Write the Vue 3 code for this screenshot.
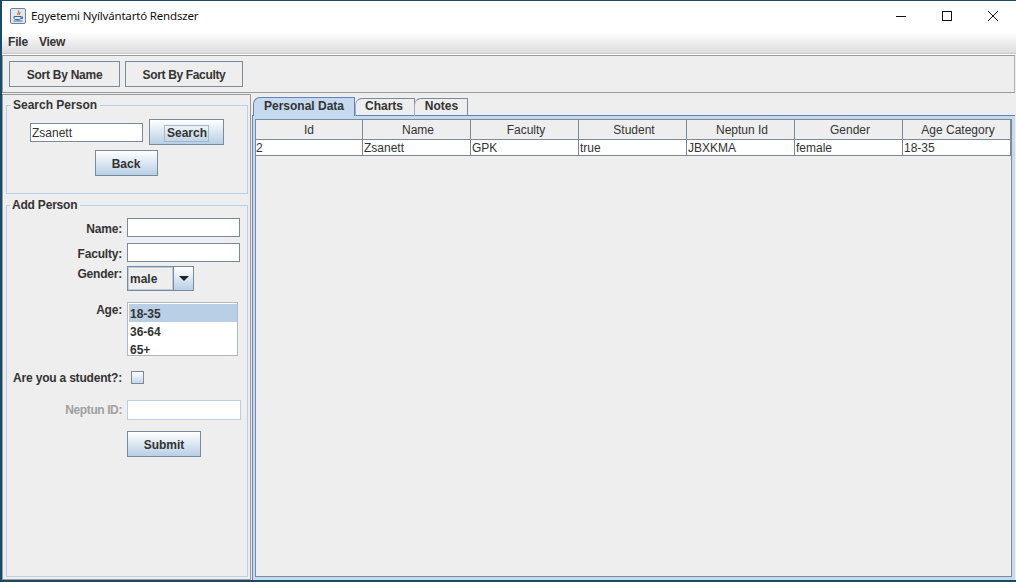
<script setup>
const columns = ['Id', 'Name', 'Faculty', 'Student', 'Neptun Id', 'Gender', 'Age Category']
const row = ['2', 'Zsanett', 'GPK', 'true', 'JBXKMA', 'female', '18-35']
const tabs = ['Personal Data', 'Charts', 'Notes']
const ages = ['18-35', '36-64', '65+']
</script>

<template>
  <div class="window">
    <header class="titlebar">
      <svg class="app-icon" viewBox="0 0 16 16">
        <rect x="0.5" y="0.5" width="15" height="15" rx="1.5" fill="#dfe8f2" stroke="#6d8196" />
        <path d="M8.5 2.5c1.5 1.5-2 2.500-.5 4.500M10 4c.8 1-1.500 1.500-.5 3" fill="none" stroke="#d9622b" stroke-width="1.100" />
        <path d="M4 8.500h7v1.500c0 1-1 1.500-2 1.500H6c-1 0-2-.5-2-1.500zM11 9h1.500v1.500H11M3.500 13h9" fill="none" stroke="#3c6a94" stroke-width="1" />
      </svg>
      <span class="title">Egyetemi Nyílvántartó Rendszer</span>
      <div class="window-controls">
        <svg viewBox="0 0 46 30" class="ctl"><path d="M18 15.500h10" stroke="#111" fill="none" /></svg>
        <svg viewBox="0 0 46 30" class="ctl"><rect x="18.500" y="10.500" width="9" height="9" stroke="#111" fill="none" /></svg>
        <svg viewBox="0 0 46 30" class="ctl"><path d="M18 10l10 10M28 10L18 20" stroke="#111" fill="none" /></svg>
      </div>
    </header>

    <nav class="menubar">
      <span>File</span>
      <span>View</span>
    </nav>

    <div class="content">
      <div class="toolbar">
        <button class="btn flat sort-name">Sort By Name</button>
        <button class="btn flat sort-faculty">Sort By Faculty</button>
      </div>

      <div class="main">
        <aside class="side">
          <fieldset class="group search">
            <legend>Search Person</legend>
            <div class="search-row">
              <input class="field search-input" value="Zsanett" />
              <button class="btn search-btn"><span class="focus">Search</span></button>
            </div>
            <button class="btn back-btn">Back</button>
          </fieldset>

          <fieldset class="group add">
            <legend class="add-legend">Add Person</legend>
            <div class="form">
              <label class="lbl name-lbl">Name:</label>
              <input class="field name-input" />
              <label class="lbl faculty-lbl">Faculty:</label>
              <input class="field name-input" />
              <label class="lbl gender-lbl">Gender:</label>
              <div class="combo">
                <span class="combo-value">male</span>
                <span class="combo-arrow"><i></i></span>
              </div>
              <label class="lbl age-lbl">Age:</label>
              <ul class="list">
                <li v-for="(a, i) in ages" :key="a" :class="{ selected: i === 0 }">{{ a }}</li>
              </ul>
              <label class="lbl student-lbl">Are you a student?:</label>
              <span class="check"></span>
              <label class="lbl neptun-lbl">Neptun ID:</label>
              <input class="field neptun-input" disabled />
              <span></span>
              <button class="btn submit-btn">Submit</button>
            </div>
          </fieldset>
        </aside>

        <section class="tabbed">
          <div class="tabs">
            <span v-for="(t, i) in tabs" :key="t" class="tab" :class="{ active: i === 0 }">{{ t }}</span>
          </div>
          <div class="tab-body">
            <div class="tab-inner">
              <div class="table">
                <div v-for="c in columns" :key="c" class="th">{{ c }}</div>
                <div v-for="c in row" :key="c" class="td">{{ c }}</div>
              </div>
            </div>
          </div>
        </section>
      </div>
    </div>
  </div>
</template>

<style>
html, body {
  margin: 0;
  background: #1b4a63;
}
</style>

<style scoped>
.window {
  width: 1014px;
  height: 579px;
  margin: 1px 0 0 2px;
  background: #eeeeee;
  font-family: "Liberation Sans", Arial, sans-serif;
  font-size: 12px;
  color: #333333;
  display: flex;
  flex-direction: column;
  overflow: hidden;
}

.titlebar {
  height: 29px;
  background: #ffffff;
  display: flex;
  align-items: center;
  padding-left: 8px;
  color: #111111;
  flex: none;
}

.app-icon {
  width: 16px;
  height: 16px;
  margin-right: 5px;
}

.title {
  font-family: "Noto Sans", "Open Sans", sans-serif;
  font-size: 11.5px;
  letter-spacing: -0.17px;
}

.window-controls {
  margin-left: auto;
  display: flex;
}

.ctl {
  width: 46px;
  height: 30px;
}

.menubar {
  height: 23px;
  flex: none;
  background: linear-gradient(#ffffff 10%, #dcdcdc);
  display: flex;
  align-items: center;
  gap: 11px;
  padding-left: 6px;
  font-weight: bold;
  letter-spacing: -0.2px;
  border-bottom: 1px solid #c8c8c8;
}

.content {
  flex: 1;
  display: flex;
  flex-direction: column;
  min-height: 0;
  border-top: 1px solid #ffffff;
}

.toolbar {
  height: 36px;
  flex: none;
  margin-right: 1px;
  border: 1px solid #9a9a9a;
  border-right-color: #b0b0b0;
  display: flex;
  align-items: center;
  gap: 5px;
  padding-left: 6px;
}

.btn {
  font: bold 12px "Liberation Sans", Arial, sans-serif;
  color: #333333;
  border: 1px solid #7a8a99;
  background: linear-gradient(#ffffff, #b8cfe5);
  padding: 2px 0 0;
  height: 26px;
  box-sizing: border-box;
  display: flex;
  align-items: center;
  justify-content: center;
}

.btn.flat {
  background: #eeeeee;
}

.sort-name {
  width: 111px;
  letter-spacing: -0.25px;
}

.sort-faculty {
  width: 118px;
  letter-spacing: -0.35px;
}

.main {
  flex: 1;
  min-height: 0;
  display: flex;
  margin-top: 1px;
}

.side {
  width: 242px;
  flex: none;
  border: 1px solid #9a9a9a;
  padding: 0 2px 2px 3px;
  display: flex;
  flex-direction: column;
  gap: 3px;
}

.group {
  margin: 0;
  padding: 0;
  border: 1px solid #b8cfe5;
  min-width: 0;
}

.group legend {
  font-weight: bold;
  padding: 0 3px 0 2px;
  margin-left: 4px;
  line-height: 14px;
  color: #333333;
}

.group .add-legend {
  letter-spacing: -0.2px;
  margin-left: 3px;
}

.search {
  height: 94px;
  flex: none;
  margin-top: 3px;
  display: flex;
  flex-direction: column;
  align-items: center;
}

.search-row {
  display: flex;
  width: 100%;
  padding-left: 23px;
  gap: 6px;
  margin-top: 7px;
  align-items: center;
  box-sizing: border-box;
}

.field {
  border: 1px solid #7a8a99;
  background: #ffffff;
  box-sizing: border-box;
  font: 12px "Liberation Sans", Arial, sans-serif;
  color: #333333;
  padding: 2px 1px 0;
  outline: none;
}

.search-input {
  width: 113px;
  height: 19px;
}

.search-btn {
  width: 75px;
}

.focus {
  border: 1px solid #a3b8cc;
  padding: 0 0 0 1px;
  line-height: 15px;
  width: 42px;
  height: 15px;
}

.back-btn {
  width: 63px;
  margin-top: 5px;
  margin-left: -2px;
}

.add {
  flex: 1;
  margin-top: 1px;
  min-height: 0;
}

.form {
  display: grid;
  grid-template-columns: 115px 1fr;
  column-gap: 5px;
  padding-top: 6px;
  align-items: start;
}

.lbl {
  text-align: right;
  font-weight: bold;
  white-space: nowrap;
  line-height: 14px;
  letter-spacing: -0.2px;
}

.name-lbl {
  margin-top: 4px;
}

.faculty-lbl {
  margin-top: 10px;
}

.name-input {
  width: 113px;
  height: 19px;
  margin-top: 0;
}

.name-input + .faculty-lbl + .name-input {
  margin-top: 6px;
}

.gender-lbl {
  margin-top: 5px;
}

.combo {
  margin-top: 4px;
  width: 67px;
  height: 25px;
  border: 1px solid #7a8a99;
  box-sizing: border-box;
  display: flex;
  font-weight: bold;
}

.combo-value {
  flex: 1;
  border: 1px solid #b8cfe5;
  background: #eeeeee;
  line-height: 23px;
  padding-left: 1px;
}

.combo-arrow {
  width: 19px;
  border-left: 1px solid #7a8a99;
  background: linear-gradient(#ffffff, #b8cfe5);
  display: flex;
  align-items: center;
  justify-content: center;
}

.combo-arrow i {
  border-left: 5px solid transparent;
  border-right: 5px solid transparent;
  border-top: 5px solid #222222;
}

.age-lbl {
  margin-top: 12px;
}

.list {
  margin: 11px 0 0;
  padding: 1px 0 1px 1px;
  list-style: none;
  width: 111px;
  height: 54px;
  box-sizing: border-box;
  border: 1px solid #b0b8c0;
  background: #ffffff;
  overflow: hidden;
  font-weight: bold;
}

.list li {
  height: 18px;
  line-height: 21px;
  padding-left: 1px;
}

.list .selected {
  background: #b8cfe5;
}

.student-lbl {
  margin-top: 16px;
  line-height: 12px;
}

.check {
  margin: 15px 0 0 4px;
  width: 13px;
  height: 13px;
  box-sizing: border-box;
  border: 1px solid #7a8a99;
  background: linear-gradient(#ffffff, #c4d6e8);
}

.neptun-lbl {
  margin-top: 19px;
  color: #a0a0a0;
  letter-spacing: -0.4px;
}

.neptun-input {
  margin-top: 16px;
  width: 114px;
  height: 20px;
  border-color: #b8cfe5;
}

.submit-btn {
  width: 74px;
  margin-top: 11px;
}

.tabbed {
  flex: 1;
  min-width: 0;
  display: flex;
  flex-direction: column;
  padding-left: 1px;
  padding-top: 3px;
}

.tabs {
  display: flex;
  height: 18px;
  flex: none;
  padding-left: 1px;
  position: relative;
}

.tab {
  box-sizing: border-box;
  height: 18px;
  margin-top: 1px;
  border: 1px solid #7a8a99;
  border-bottom: none;
  border-left-color: #a0adb9;
  font-weight: bold;
  line-height: 14px;
  text-align: center;
  width: 60px;
  padding-right: 2px;
  border-top-left-radius: 7px 7px;
}

.tab.active {
  background: #c5d9ef;
  width: 102px;
  height: 19px;
  margin-top: 0;
  padding-right: 0;
  border-color: #6382bf;
  line-height: 17px;
}

.tab:nth-child(3) {
  margin-left: -1px;
  width: 54px;
  padding-right: 0;
  padding-left: 1px;
}

.tab-body {
  flex: 1;
  min-height: 0;
  display: flex;
  border-top: 1px solid #6382bf;
  border-left: 1px solid #6382bf;
  background: #c5d9ef;
  padding: 3px 3px 3px 2px;
  margin-right: 1px;
}

.tab-inner {
  flex: 1;
  min-width: 0;
  background: #eeeeee;
  border: 1px solid #7a8a99;
}

.table {
  display: grid;
  grid-template-columns: 107px 108px 108px 108px 108px 108px 1fr;
  border-right: 1px solid #7a8a99;
}

.th {
  height: 20px;
  box-sizing: border-box;
  text-align: center;
  line-height: 21px;
  padding-left: 3px;
  border-right: 1px solid #7a8a99;
  border-bottom: 1px solid #7a8a99;
  background: #eeeeee;
}

.th:first-child {
  padding-left: 0;
}

.th:nth-child(7), .td:nth-child(14) {
  border-right: none;
}

.td {
  height: 16px;
  box-sizing: border-box;
  line-height: 16px;
  background: #ffffff;
  border-right: 1px solid #7a8a99;
  border-bottom: 1px solid #7a8a99;
  padding-left: 1px;
  color: #333333;
}

.td:nth-child(8) {
  padding-left: 0;
}
</style>
